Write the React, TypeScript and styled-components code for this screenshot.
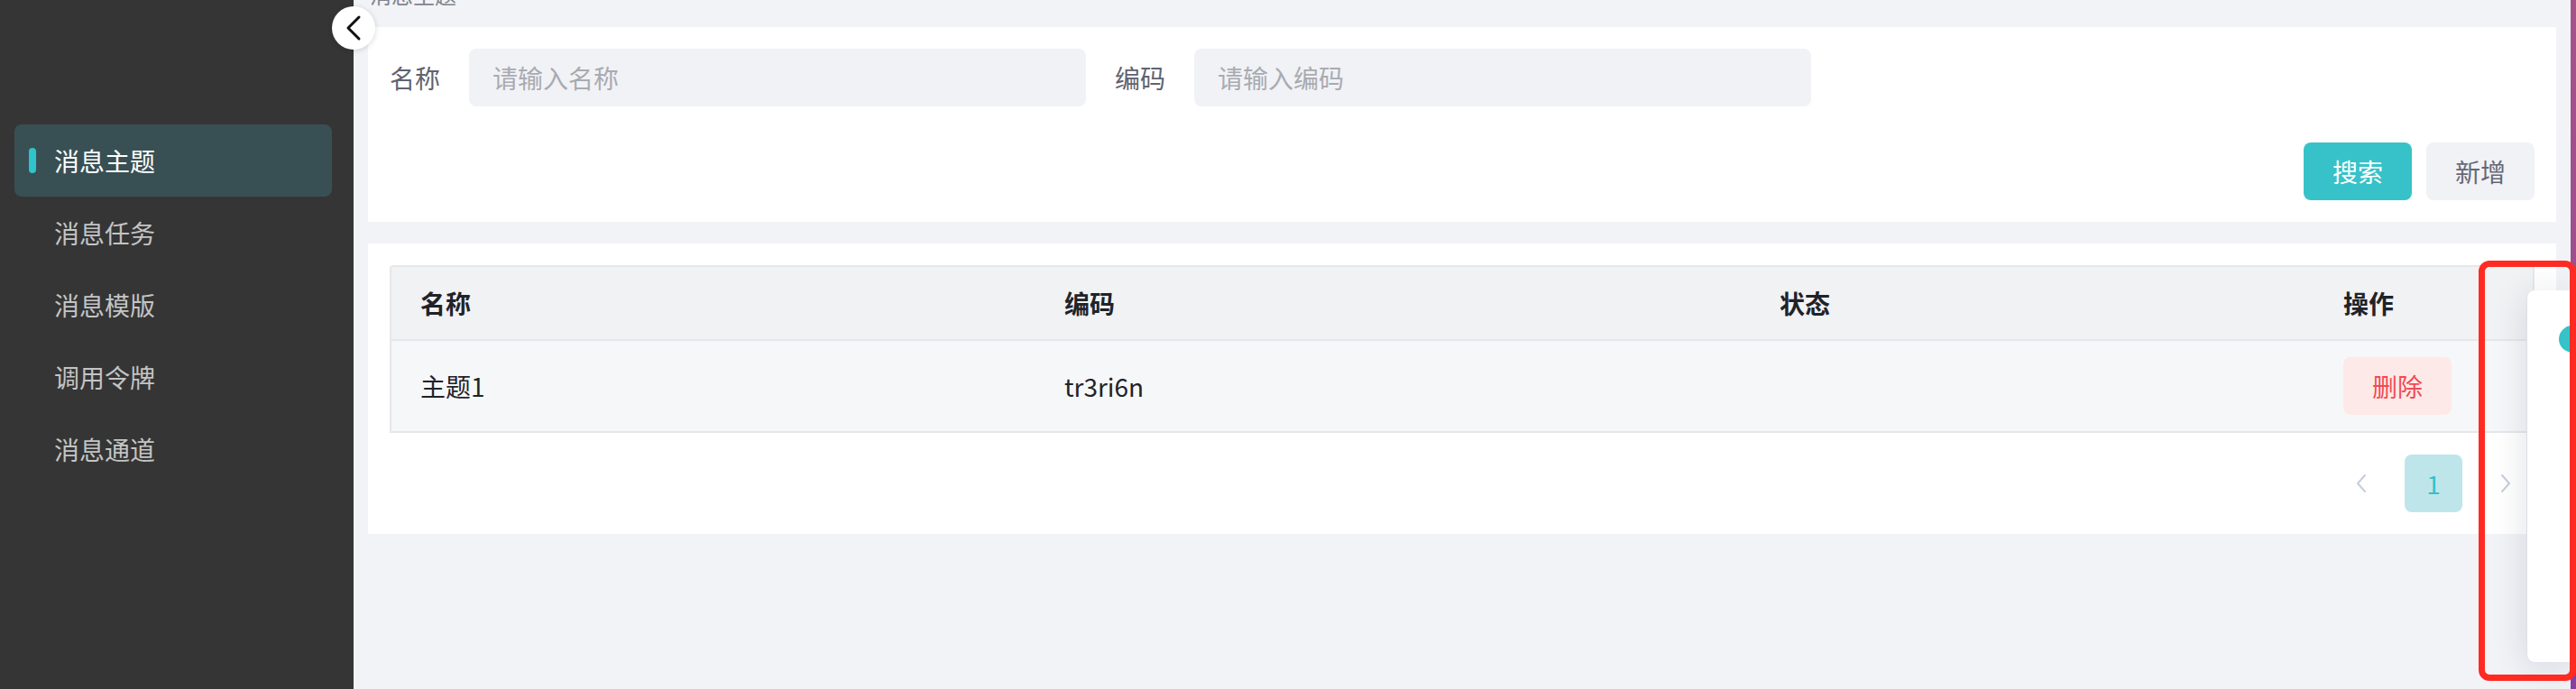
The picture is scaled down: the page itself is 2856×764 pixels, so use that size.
import React from "react";
import styled, { createGlobalStyle } from "styled-components";

const GlobalStyle = createGlobalStyle`
  html, body { margin: 0; padding: 0; background: #f2f3f7; }
  body { font-family: "Noto Sans CJK SC", "Noto Sans", sans-serif; overflow: hidden; }
  * { box-sizing: border-box; }
  input::placeholder { color: #a8abb2; }
`;

const Shell = styled.div`
  position: relative;
  display: flex;
  width: 2856px;
  height: 764px;
  overflow: hidden;
`;

const Sidebar = styled.aside`
  width: 392px;
  flex: none;
  background: #353535;
  padding: 138px 24px 0 16px;
  display: flex;
  flex-direction: column;
`;

const NavItem = styled.div<{ $active?: boolean }>`
  height: 80px;
  display: flex;
  align-items: center;
  padding-left: 16px;
  border-radius: 8px;
  font-size: 28px;
  line-height: 40px;
  background: ${(p) => (p.$active ? "#385054" : "transparent")};
  color: ${(p) => (p.$active ? "#ffffff" : "#c4c4c4")};
`;

const NavMark = styled.span<{ $active?: boolean }>`
  width: 8px;
  height: 28px;
  border-radius: 4px;
  margin-right: 20px;
  flex: none;
  background: ${(p) => (p.$active ? "#2fc4cc" : "transparent")};
`;

const Main = styled.main`
  flex: 1;
  min-width: 0;
  background: #f2f3f7;
  padding: 0 16px;
  display: flex;
  flex-direction: column;
`;

const EdgeStripe = styled.div`
  width: 6px;
  flex: none;
  background: linear-gradient(180deg, #a6538a 0%, #9a4a92 60%, #8a3fa0 100%);
`;

const PageTitle = styled.div`
  margin: -18px 0 24px 2px;
  height: 24px;
  line-height: 24px;
  font-size: 24px;
  color: #80858f;
`;

const Card = styled.section`
  background: #ffffff;
  padding: 24px;
  & + & {
    margin-top: 24px;
  }
`;

const FilterRow = styled.div`
  display: flex;
  align-items: center;
  gap: 32px;
`;

const FormItem = styled.label`
  display: flex;
  align-items: center;
  gap: 32px;
`;

const FieldLabel = styled.span`
  width: 56px;
  font-size: 28px;
  line-height: 40px;
  color: #5f6370;
`;

const TextInput = styled.input`
  width: 684px;
  height: 64px;
  border: none;
  outline: none;
  border-radius: 8px;
  background: #f1f2f5;
  padding: 0 26px;
  font-family: inherit;
  font-size: 28px;
  color: #303133;
`;

const Actions = styled.div`
  display: flex;
  justify-content: flex-end;
  gap: 16px;
  margin-top: 40px;
`;

const Button = styled.button<{ $variant: "primary" | "plain" | "danger" }>`
  width: 120px;
  height: 64px;
  border: none;
  border-radius: 8px;
  font-family: inherit;
  font-size: 28px;
  padding: 0;
  cursor: pointer;
  background: ${(p) =>
    p.$variant === "primary" ? "#37c2c9" : p.$variant === "danger" ? "#fee9e9" : "#f1f2f5"};
  color: ${(p) =>
    p.$variant === "primary" ? "#ffffff" : p.$variant === "danger" ? "#f14b50" : "#646876"};
`;

const Table = styled.div`
  border: 2px solid #e6e7eb;
  border-radius: 4px 4px 0 0;
`;

const TableRow = styled.div<{ $head?: boolean }>`
  display: grid;
  grid-template-columns: 714px 793px 625px 1fr;
  height: ${(p) => (p.$head ? "80px" : "102px")};
  background: ${(p) => (p.$head ? "#f1f2f4" : "#f6f7f9")};
  & + & {
    border-top: 2px solid #e6e7eb;
  }
`;

const Cell = styled.div<{ $head?: boolean }>`
  display: flex;
  align-items: center;
  padding-left: 32px;
  font-size: 28px;
  line-height: 40px;
  color: #1f2329;
  font-weight: ${(p) => (p.$head ? 600 : 400)};
`;

const Pager = styled.div`
  display: flex;
  justify-content: flex-end;
  gap: 16px;
  margin-top: 24px;
`;

const PageItem = styled.div<{ $current?: boolean }>`
  width: 64px;
  height: 64px;
  border-radius: 8px;
  display: flex;
  align-items: center;
  justify-content: center;
  font-size: 28px;
  background: ${(p) => (p.$current ? "#bee6ea" : "transparent")};
  color: ${(p) => (p.$current ? "#36c0c8" : "#c6cedc")};
`;

const ToggleButton = styled.div`
  position: absolute;
  left: 368px;
  top: 7px;
  width: 48px;
  height: 48px;
  border-radius: 50%;
  background: #ffffff;
  box-shadow: 0 1px 6px rgba(0, 0, 0, 0.16);
  display: flex;
  align-items: center;
  justify-content: center;
`;

const Drawer = styled.div`
  position: absolute;
  left: 2802px;
  top: 322px;
  width: 48px;
  height: 412px;
  background: #ffffff;
  border-radius: 8px 0 0 8px;
  box-shadow: -1px 0 0 #dfe0e6, 0 6px 40px rgba(30, 35, 60, 0.14);
  overflow: hidden;
`;

const DrawerDot = styled.span`
  position: absolute;
  left: 35px;
  top: 39px;
  width: 30px;
  height: 30px;
  border-radius: 50%;
  background: #36c2c9;
`;

const Annotation = styled.div`
  position: absolute;
  left: 2748px;
  top: 289px;
  width: 108px;
  height: 466px;
  border: 7px solid #ff2b22;
  border-radius: 12px;
  pointer-events: none;
`;

const Chevron = ({ dir, color, w, h, sw }: { dir: "left" | "right"; color: string; w: number; h: number; sw: number }) => (
  <svg width={w} height={h} viewBox={`0 0 ${w} ${h}`} fill="none">
    <polyline
      points={
        dir === "left"
          ? `${w - sw},${sw} ${sw},${h / 2} ${w - sw},${h - sw}`
          : `${sw},${sw} ${w - sw},${h / 2} ${sw},${h - sw}`
      }
      stroke={color}
      strokeWidth={sw}
      strokeLinecap="round"
      strokeLinejoin="round"
    />
  </svg>
);

const navItems = ["消息主题", "消息任务", "消息模版", "调用令牌", "消息通道"];

export default function App() {
  return (
    <>
      <GlobalStyle />
      <Shell>
        <Sidebar>
          {navItems.map((t, i) => (
            <NavItem key={t} $active={i === 0}>
              <NavMark $active={i === 0} />
              {t}
            </NavItem>
          ))}
        </Sidebar>
        <Main>
          <PageTitle>消息主题</PageTitle>
          <Card>
            <FilterRow>
              <FormItem>
                <FieldLabel>名称</FieldLabel>
                <TextInput placeholder="请输入名称" />
              </FormItem>
              <FormItem>
                <FieldLabel>编码</FieldLabel>
                <TextInput placeholder="请输入编码" />
              </FormItem>
            </FilterRow>
            <Actions>
              <Button $variant="primary">搜索</Button>
              <Button $variant="plain">新增</Button>
            </Actions>
          </Card>
          <Card>
            <Table>
              <TableRow $head>
                <Cell $head>名称</Cell>
                <Cell $head>编码</Cell>
                <Cell $head>状态</Cell>
                <Cell $head>操作</Cell>
              </TableRow>
              <TableRow>
                <Cell>主题1</Cell>
                <Cell>tr3ri6n</Cell>
                <Cell />
                <Cell>
                  <Button $variant="danger">删除</Button>
                </Cell>
              </TableRow>
            </Table>
            <Pager>
              <PageItem>
                <Chevron dir="left" color="#c6cedc" w={12} h={22} sw={2} />
              </PageItem>
              <PageItem $current>1</PageItem>
              <PageItem>
                <Chevron dir="right" color="#c6cedc" w={12} h={22} sw={2} />
              </PageItem>
            </Pager>
          </Card>
        </Main>
        <EdgeStripe />
        <ToggleButton>
          <Chevron dir="left" color="#111111" w={18} h={30} sw={3} />
        </ToggleButton>
        <Drawer>
          <DrawerDot />
        </Drawer>
        <Annotation />
      </Shell>
    </>
  );
}
